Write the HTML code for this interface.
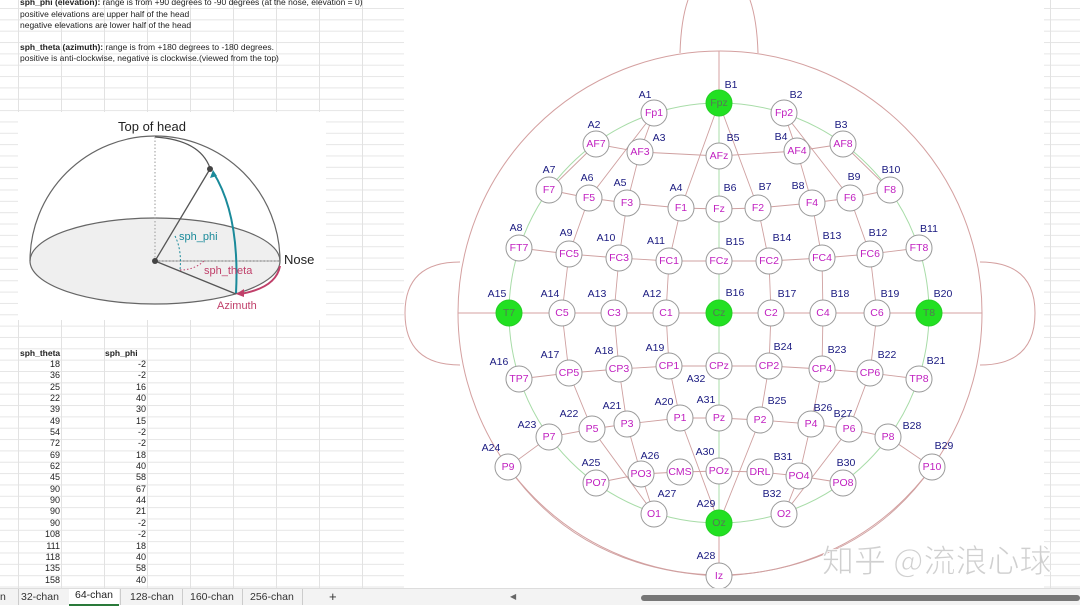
<!DOCTYPE html>
<html><head><meta charset="utf-8"><style>
html,body{margin:0;padding:0;width:1080px;height:604px;overflow:hidden;background:#fff;font-family:"Liberation Sans",sans-serif}
.grid{position:absolute;left:0;top:0;width:1080px;height:588px;
background-image:linear-gradient(to right,#e2e2e2 1px,transparent 1px),linear-gradient(to bottom,#e6e6e6 1px,transparent 1px);
background-size:43px 11.35px;background-position:18px 8px}
.t{position:absolute;font-size:8.5px;color:#222;white-space:nowrap;line-height:11px}
.num{font-size:9px;color:#222;text-align:right;width:40px;height:11.35px;line-height:11.35px}
.tabs{position:absolute;left:0;top:588px;width:1080px;height:16px;background:#f3f3f3;border-top:1px solid #ddd;font-size:10.5px;color:#333}
.tabs span{position:absolute;top:2px}
</style></head><body>
<div class="grid"></div>
<div style="position:absolute;left:404px;top:0;width:640px;height:588px;background:#fff"></div>
<div class="t" style="left:20px;top:-3px"><b>sph_phi (elevation):</b> range is from +90 degrees to -90 degrees (at the nose, elevation = 0)</div>
<div class="t" style="left:20px;top:9px">positive elevations are upper half of the head</div>
<div class="t" style="left:20px;top:20px">negative elevations are lower half of the head</div>
<div class="t" style="left:20px;top:42px"><b>sph_theta (azimuth):</b> range is from +180 degrees to -180 degrees.</div>
<div class="t" style="left:20px;top:53px">positive is anti-clockwise, negative is clockwise.(viewed from the top)</div>

<svg style="position:absolute;left:18px;top:112px" width="308" height="208" viewBox="18 112 308 208">
<rect x="18" y="112" width="308" height="208" fill="#fff"/>
<ellipse cx="155" cy="261" rx="125" ry="43" fill="#efefef" stroke="#666" stroke-width="1.2"/>
<path d="M30,261 A125,125 0 0 1 280,261" fill="none" stroke="#666" stroke-width="1.2"/>
<path d="M155,137 Q200,140 210,168" fill="none" stroke="#555" stroke-width="1.2"/>
<line x1="155" y1="137" x2="155" y2="261" stroke="#999" stroke-dasharray="1.5,2"/>
<line x1="155" y1="261" x2="280" y2="261" stroke="#888" stroke-dasharray="1.5,2"/>
<line x1="155" y1="261" x2="280" y2="261" stroke="#666" stroke-width="1" opacity=".5"/>
<line x1="155" y1="261" x2="210" y2="169" stroke="#555" stroke-width="1.3"/>
<line x1="155" y1="261" x2="236" y2="294" stroke="#555" stroke-width="1.3"/>
<path d="M236,293 Q240,215 213,172" fill="none" stroke="#1a8a9a" stroke-width="2"/>
<path d="M213,170 l-3,8 l7,-2z" fill="#1a8a9a"/>
<path d="M280,266 Q276,288 240,294" fill="none" stroke="#c0406a" stroke-width="2"/>
<path d="M236,294 l8,-5 l0,8z" fill="#c0406a"/>
<path d="M175,236 Q182,250 180,270" fill="none" stroke="#1a8a9a" stroke-dasharray="2,2"/>
<path d="M180,270 Q195,270 205,260" fill="none" stroke="#c0406a" stroke-dasharray="1.5,2"/>
<circle cx="155" cy="261" r="3" fill="#444"/><circle cx="210" cy="169" r="3" fill="#444"/>
<text x="118" y="131" font-size="13" fill="#222">Top of head</text>
<text x="284" y="264" font-size="13" fill="#222">Nose</text>
<text x="179" y="240" font-size="11" fill="#1a8a9a">sph_phi</text>
<text x="204" y="274" font-size="11" fill="#c0406a">sph_theta</text>
<text x="217" y="309" font-size="11" fill="#c0406a">Azimuth</text>
</svg>

<div class="t" style="left:20px;top:348px;font-weight:bold;font-size:8.5px">sph_theta</div>
<div class="t" style="left:105px;top:348px;font-weight:bold;font-size:8.5px">sph_phi</div>
<div style="position:absolute;left:20px;top:359px">
<div class="num">18</div><div class="num">36</div><div class="num">25</div><div class="num">22</div><div class="num">39</div><div class="num">49</div><div class="num">54</div><div class="num">72</div><div class="num">69</div><div class="num">62</div><div class="num">45</div><div class="num">90</div><div class="num">90</div><div class="num">90</div><div class="num">90</div><div class="num">108</div><div class="num">111</div><div class="num">118</div><div class="num">135</div><div class="num">158</div>
</div>
<div style="position:absolute;left:106px;top:359px">
<div class="num">-2</div><div class="num">-2</div><div class="num">16</div><div class="num">40</div><div class="num">30</div><div class="num">15</div><div class="num">-2</div><div class="num">-2</div><div class="num">18</div><div class="num">40</div><div class="num">58</div><div class="num">67</div><div class="num">44</div><div class="num">21</div><div class="num">-2</div><div class="num">-2</div><div class="num">18</div><div class="num">40</div><div class="num">58</div><div class="num">40</div>
</div>
<div style="position:absolute;left:1050px;top:0;width:1px;height:588px;background:#e2e2e2"></div>

<svg style="position:absolute;left:0;top:0" width="1080" height="588" viewBox="0 0 1080 588" font-family="Liberation Sans,sans-serif">
<g fill="none" stroke="#d4a0a0" stroke-width="1">
<circle cx="720" cy="313" r="262"/>
<path d="M680,53 Q681,20 688,0 M758,53 Q757,20 750,0"/>
<path d="M460,262 Q405,262 405,313 Q405,365 460,365"/>
<path d="M980,262 Q1035,262 1035,313 Q1035,365 980,365"/>
<line x1="458" y1="313" x2="982" y2="313"/>
<line x1="719" y1="51" x2="719" y2="90"/>
<line x1="719" y1="536" x2="719" y2="575"/>
</g>
<g fill="none" stroke="#a8dca8" stroke-width="1">
<circle cx="719" cy="313" r="210"/>
<line x1="719" y1="103" x2="719" y2="523"/>
</g>
<g fill="none" stroke="#cfa0a0" stroke-width="0.9">
<polyline points="596,144 640,152 719,156 797,151 843,144"/>
<polyline points="549,190 589,198 627,203 681,208 719,209 758,208 812,203 850,198 890,190"/>
<polyline points="519,248 569,254 619,258 669,261 719,261 769,261 822,258 870,254 919,248"/>
<polyline points="519,379 569,373 619,369 669,366 719,366 769,366 822,369 870,373 919,379"/>
<polyline points="508,467 549,437 592,429 627,424 680,418 719,418 760,420 811,424 849,429 888,437 932,467"/>
<polyline points="596,483 641,474 680,472 719,471 760,472 799,476 843,483"/>
<path d="M508,467 Q580,570 719,576 Q860,570 932,467"/>
<polyline points="654,113 640,152 627,203 619,258 614,313 619,369 627,424 641,474 654,514"/>
<polyline points="654,113 589,198 569,254 562,313 569,373 592,429 654,514"/>
<polyline points="719,103 681,208 669,261 666,313 669,366 680,418 719,523"/>
<polyline points="719,103 758,208 769,261 771,313 769,366 760,420 719,523"/>
<polyline points="784,113 797,151 812,203 822,258 823,313 822,369 811,424 799,476 784,514"/>
<polyline points="784,113 850,198 870,254 877,313 870,373 849,429 784,514"/>
<polyline points="596,144 549,190"/><polyline points="843,144 890,190"/>
</g>
<g stroke="#999" stroke-width="1" fill="#fff">
<circle cx="719" cy="103" r="13" fill="#22e022" stroke="#22d022"/>
<circle cx="654" cy="113" r="13"/><circle cx="784" cy="113" r="13"/>
<circle cx="596" cy="144" r="13"/><circle cx="640" cy="152" r="13"/><circle cx="719" cy="156" r="13"/><circle cx="797" cy="151" r="13"/><circle cx="843" cy="144" r="13"/>
<circle cx="549" cy="190" r="13"/><circle cx="589" cy="198" r="13"/><circle cx="627" cy="203" r="13"/><circle cx="681" cy="208" r="13"/><circle cx="719" cy="209" r="13"/><circle cx="758" cy="208" r="13"/><circle cx="812" cy="203" r="13"/><circle cx="850" cy="198" r="13"/><circle cx="890" cy="190" r="13"/>
<circle cx="519" cy="248" r="13"/><circle cx="569" cy="254" r="13"/><circle cx="619" cy="258" r="13"/><circle cx="669" cy="261" r="13"/><circle cx="719" cy="261" r="13"/><circle cx="769" cy="261" r="13"/><circle cx="822" cy="258" r="13"/><circle cx="870" cy="254" r="13"/><circle cx="919" cy="248" r="13"/>
<circle cx="509" cy="313" r="13" fill="#22e022" stroke="#22d022"/><circle cx="562" cy="313" r="13"/><circle cx="614" cy="313" r="13"/><circle cx="666" cy="313" r="13"/><circle cx="719" cy="313" r="13" fill="#22e022" stroke="#22d022"/><circle cx="771" cy="313" r="13"/><circle cx="823" cy="313" r="13"/><circle cx="877" cy="313" r="13"/><circle cx="929" cy="313" r="13" fill="#22e022" stroke="#22d022"/>
<circle cx="519" cy="379" r="13"/><circle cx="569" cy="373" r="13"/><circle cx="619" cy="369" r="13"/><circle cx="669" cy="366" r="13"/><circle cx="719" cy="366" r="13"/><circle cx="769" cy="366" r="13"/><circle cx="822" cy="369" r="13"/><circle cx="870" cy="373" r="13"/><circle cx="919" cy="379" r="13"/>
<circle cx="549" cy="437" r="13"/><circle cx="592" cy="429" r="13"/><circle cx="627" cy="424" r="13"/><circle cx="680" cy="418" r="13"/><circle cx="719" cy="418" r="13"/><circle cx="760" cy="420" r="13"/><circle cx="811" cy="424" r="13"/><circle cx="849" cy="429" r="13"/><circle cx="888" cy="437" r="13"/>
<circle cx="508" cy="467" r="13"/><circle cx="932" cy="467" r="13"/>
<circle cx="596" cy="483" r="13"/><circle cx="641" cy="474" r="13"/><circle cx="680" cy="472" r="13"/><circle cx="719" cy="471" r="13"/><circle cx="760" cy="472" r="13"/><circle cx="799" cy="476" r="13"/><circle cx="843" cy="483" r="13"/>
<circle cx="654" cy="514" r="13"/><circle cx="719" cy="523" r="13" fill="#22e022" stroke="#22d022"/><circle cx="784" cy="514" r="13"/>
<circle cx="719" cy="576" r="13"/>
</g>
<g font-size="10.5" fill="#c020c0" text-anchor="middle" dominant-baseline="central">
<text x="719" y="103" fill="#557755">Fpz</text><text x="654" y="113">Fp1</text><text x="784" y="113">Fp2</text>
<text x="596" y="144">AF7</text><text x="640" y="152">AF3</text><text x="719" y="156">AFz</text><text x="797" y="151">AF4</text><text x="843" y="144">AF8</text>
<text x="549" y="190">F7</text><text x="589" y="198">F5</text><text x="627" y="203">F3</text><text x="681" y="208">F1</text><text x="719" y="209">Fz</text><text x="758" y="208">F2</text><text x="812" y="203">F4</text><text x="850" y="198">F6</text><text x="890" y="190">F8</text>
<text x="519" y="248">FT7</text><text x="569" y="254">FC5</text><text x="619" y="258">FC3</text><text x="669" y="261">FC1</text><text x="719" y="261">FCz</text><text x="769" y="261">FC2</text><text x="822" y="258">FC4</text><text x="870" y="254">FC6</text><text x="919" y="248">FT8</text>
<text x="509" y="313" fill="#557755">T7</text><text x="562" y="313">C5</text><text x="614" y="313">C3</text><text x="666" y="313">C1</text><text x="719" y="313" fill="#557755">Cz</text><text x="771" y="313">C2</text><text x="823" y="313">C4</text><text x="877" y="313">C6</text><text x="929" y="313" fill="#557755">T8</text>
<text x="519" y="379">TP7</text><text x="569" y="373">CP5</text><text x="619" y="369">CP3</text><text x="669" y="366">CP1</text><text x="719" y="366">CPz</text><text x="769" y="366">CP2</text><text x="822" y="369">CP4</text><text x="870" y="373">CP6</text><text x="919" y="379">TP8</text>
<text x="549" y="437">P7</text><text x="592" y="429">P5</text><text x="627" y="424">P3</text><text x="680" y="418">P1</text><text x="719" y="418">Pz</text><text x="760" y="420">P2</text><text x="811" y="424">P4</text><text x="849" y="429">P6</text><text x="888" y="437">P8</text>
<text x="508" y="467">P9</text><text x="932" y="467">P10</text>
<text x="596" y="483">PO7</text><text x="641" y="474">PO3</text><text x="680" y="472">CMS</text><text x="719" y="471">POz</text><text x="760" y="472">DRL</text><text x="799" y="476">PO4</text><text x="843" y="483">PO8</text>
<text x="654" y="514">O1</text><text x="719" y="523" fill="#557755">Oz</text><text x="784" y="514">O2</text><text x="719" y="576">Iz</text>
</g>
<g font-size="10.5" fill="#1a1a80" text-anchor="middle" dominant-baseline="central">
<text x="731" y="85">B1</text><text x="645" y="95">A1</text><text x="796" y="95">B2</text>
<text x="594" y="125">A2</text><text x="659" y="138">A3</text><text x="733" y="138">B5</text><text x="781" y="137">B4</text><text x="841" y="125">B3</text>
<text x="549" y="170">A7</text><text x="587" y="178">A6</text><text x="620" y="183">A5</text><text x="676" y="188">A4</text><text x="730" y="188">B6</text><text x="765" y="187">B7</text><text x="798" y="186">B8</text><text x="854" y="177">B9</text><text x="891" y="170">B10</text>
<text x="516" y="228">A8</text><text x="566" y="233">A9</text><text x="606" y="238">A10</text><text x="656" y="241">A11</text><text x="735" y="242">B15</text><text x="782" y="238">B14</text><text x="832" y="236">B13</text><text x="878" y="233">B12</text><text x="929" y="229">B11</text>
<text x="497" y="294">A15</text><text x="550" y="294">A14</text><text x="597" y="294">A13</text><text x="652" y="294">A12</text><text x="735" y="293">B16</text><text x="787" y="294">B17</text><text x="840" y="294">B18</text><text x="890" y="294">B19</text><text x="943" y="294">B20</text>
<text x="499" y="362">A16</text><text x="550" y="355">A17</text><text x="604" y="351">A18</text><text x="655" y="348">A19</text><text x="696" y="379">A32</text><text x="783" y="347">B24</text><text x="837" y="350">B23</text><text x="887" y="355">B22</text><text x="936" y="361">B21</text>
<text x="527" y="425">A23</text><text x="569" y="414">A22</text><text x="612" y="406">A21</text><text x="664" y="402">A20</text><text x="706" y="400">A31</text><text x="777" y="401">B25</text><text x="823" y="408">B26</text><text x="843" y="414">B27</text><text x="912" y="426">B28</text>
<text x="491" y="448">A24</text><text x="944" y="446">B29</text>
<text x="591" y="463">A25</text><text x="650" y="456">A26</text><text x="705" y="452">A30</text><text x="783" y="457">B31</text><text x="846" y="463">B30</text>
<text x="667" y="494">A27</text><text x="706" y="504">A29</text><text x="772" y="494">B32</text><text x="706" y="556">A28</text>
</g>
<text x="822" y="572" font-size="32" fill="#d0d0d0" stroke="#fff" stroke-width="0.8" font-family="Noto Sans CJK SC,sans-serif">知乎 @流浪心球</text>
</svg>

<div class="tabs">
<span style="left:0">n</span>
<span style="left:21px">32-chan</span>
<span style="left:69px;top:0;height:15px;background:#fff;padding:0 6px;border-bottom:2px solid #2a7a3a;color:#222">64-chan</span>
<span style="left:130px">128-chan</span>
<span style="left:190px">160-chan</span>
<span style="left:250px">256-chan</span>
<span style="left:329px;font-size:13px;top:0">+</span>
<span style="left:510px;font-size:8px;top:3px;color:#666">◀</span>
<div style="position:absolute;left:641px;top:6px;width:439px;height:6px;background:#777;border-radius:3px"></div>
<div style="position:absolute;left:18px;top:0;width:1px;height:16px;background:#ccc"></div>
<div style="position:absolute;left:120px;top:0;width:1px;height:16px;background:#ccc"></div>
<div style="position:absolute;left:182px;top:0;width:1px;height:16px;background:#ccc"></div>
<div style="position:absolute;left:242px;top:0;width:1px;height:16px;background:#ccc"></div>
<div style="position:absolute;left:302px;top:0;width:1px;height:16px;background:#ccc"></div>
</div>
</body></html>
